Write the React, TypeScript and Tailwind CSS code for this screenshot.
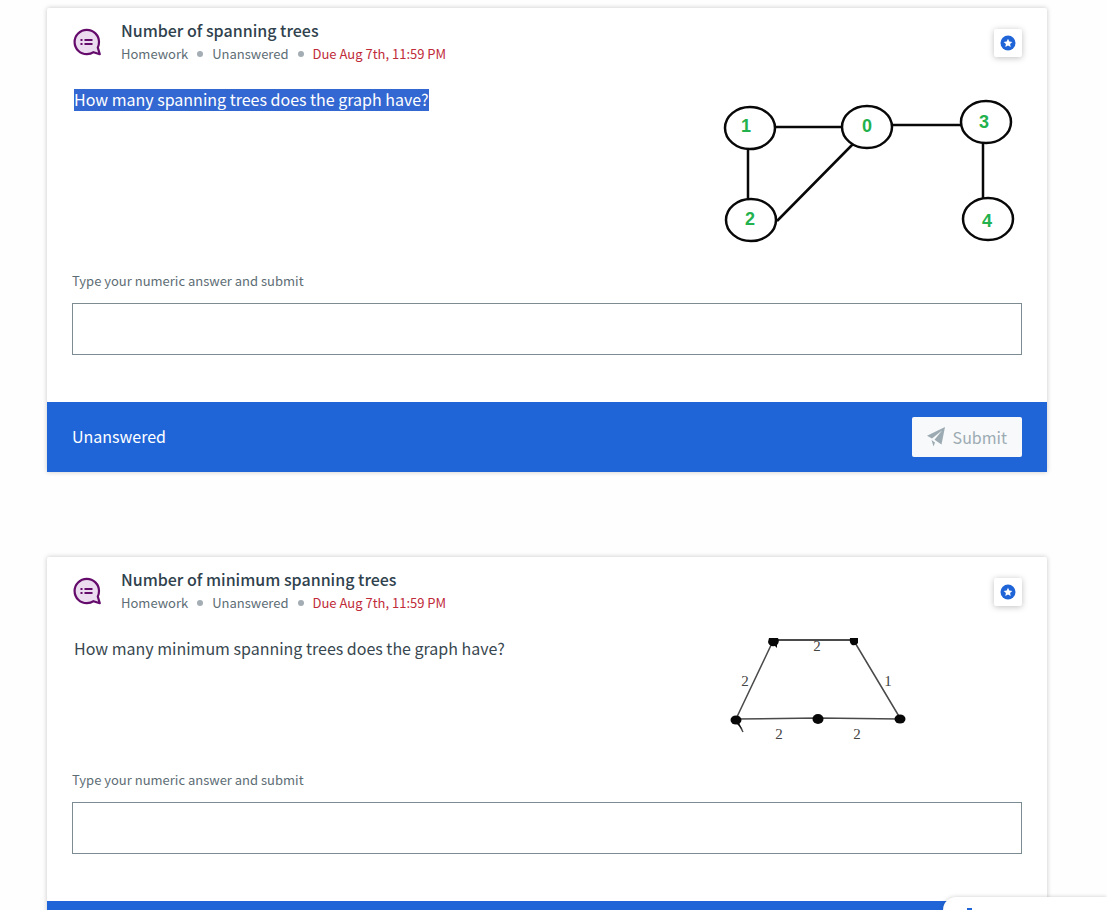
import type { ReactNode } from "react";

type Question = {
  id: string;
  title: string;
  prompt: string;
  selected?: boolean;
  figure: ReactNode;
};

const NODES = [
  { label: "1", cx: 50, cy: 39, tx: 46, ty: 43 },
  { label: "0", cx: 167, cy: 38, tx: 167, ty: 43 },
  { label: "3", cx: 286, cy: 33, tx: 284, ty: 39 },
  { label: "2", cx: 51, cy: 131, tx: 50, ty: 136 },
  { label: "4", cx: 288, cy: 130, tx: 287, ty: 138 },
];

function SpanningGraph() {
  return (
    <svg width="322" height="160" viewBox="0 0 322 160" role="img" aria-label="Graph with five nodes">
      <g stroke="#080808" strokeWidth="2.5" fill="none">
        <path d="M75 38H142M193 36H261M48 60V110M283 54V109M77 132L153 55" />
        {NODES.map((n) => (
          <ellipse key={n.label} cx={n.cx} cy={n.cy} rx="25" ry="21" />
        ))}
      </g>
      {NODES.map((n) => (
        <text
          key={n.label}
          x={n.tx}
          y={n.ty}
          textAnchor="middle"
          fill="#22b14c"
          className="font-['Liberation_Sans',sans-serif] text-[18px] font-bold"
        >
          {n.label}
        </text>
      ))}
    </svg>
  );
}

function WeightedGraph() {
  return (
    <svg width="322" height="110" viewBox="0 0 322 110" role="img" aria-label="Weighted graph with five nodes">
      <g stroke="#4a4a4a" strokeWidth="1.5" fill="none">
        <path d="M73 2H154" strokeWidth="2" />
        <path d="M73 3L36 81L43 94M154 3L200 80M36 81L118 80L200 81" />
      </g>
      <g fill="#080808">
        <path d="M69 0H78Q80 4 77 7L77 10L75 8Q69 9 68 4Z" />
        <path d="M150 0H158V5Q156 8 152 7Q149 5 150 0Z" />
        <ellipse cx="36" cy="82" rx="5.5" ry="4.5" />
        <path d="M38 84L43 92L37 86Z" />
        <ellipse cx="118" cy="81" rx="5.5" ry="5" />
        <ellipse cx="200" cy="81" rx="5.5" ry="4.5" />
      </g>
      <g fill="#444" textAnchor="middle" className="font-['Liberation_Serif',serif] text-[15px]">
        <text x="117" y="13">2</text>
        <text x="45" y="48">2</text>
        <text x="188" y="48">1</text>
        <text x="79" y="101">2</text>
        <text x="157" y="101">2</text>
      </g>
    </svg>
  );
}

function QuestionIcon() {
  return (
    <svg width="30" height="30" viewBox="0 0 30 30" aria-hidden="true" className="shrink-0">
      <path
        d="M27 15A12.2 12.2 0 1 0 15 27.2C17.600 27.200 19.700 26.500 21.500 25.200L27.800 27.200L25.800 20.600C26.600 19 27 17 27 15Z"
        fill="#ecdcf0"
        stroke="#640b6b"
        strokeWidth="2.200"
        strokeLinejoin="round"
      />
      <path d="M8.500 13H10.500M8.500 17H10.500M12.500 13H20.500M12.500 17H20.500" stroke="#640b6b" strokeWidth="2.200" />
    </svg>
  );
}

function StarIcon() {
  return (
    <svg width="16" height="16" viewBox="0 0 16 16" aria-hidden="true">
      <circle cx="8" cy="8" r="7.5" fill="#2065d8" />
      <path d="M8 3.800L9.300 6.600L12.300 6.900L10.100 9L10.700 12L8 10.500L5.300 12L5.900 9L3.700 6.900L6.700 6.600Z" fill="#fff" />
    </svg>
  );
}

function SendIcon() {
  return (
    <svg width="18" height="20" viewBox="0 0 18 20" aria-hidden="true" fill="#9cabb3">
      <path d="M18 0L0 8.800L5 11.500L15 3.500L7.500 12.800L14.500 17.500Z" />
      <path d="M4.500 13L8 15.500L6.500 19.500Z" />
    </svg>
  );
}

const QUESTIONS: Question[] = [
  {
    id: "spanning",
    title: "Number of spanning trees",
    prompt: "How many spanning trees does the graph have?",
    selected: true,
    figure: <SpanningGraph />,
  },
  {
    id: "minimum",
    title: "Number of minimum spanning trees",
    prompt: "How many minimum spanning trees does the graph have?",
    figure: <WeightedGraph />,
  },
];

function Dot() {
  return <span className="size-[6px] rounded-full bg-[#a3adb3]" />;
}

function QuestionCard({ question }: { question: Question }) {
  return (
    <article className="rounded-t-xs bg-white shadow-[0_0_5px_rgba(0,0,0,0.22)]">
      <div className="px-[25px] pb-[47px]">
        <header className="flex items-start justify-between pt-3">
          <div className="flex gap-[19px]">
            <div className="pt-[7px]">
              <QuestionIcon />
            </div>
            <div>
              <h2 className="mb-[2px] text-[16px] leading-5 font-medium text-[#2f424d]">{question.title}</h2>
              <div className="flex items-center gap-[9px] text-[13px] leading-6 text-[#5d6d75]">
                <span>Homework</span>
                <Dot />
                <span>Unanswered</span>
                <Dot />
                <span className="text-[#c02b3a]">Due Aug 7th, 11:59 PM</span>
              </div>
            </div>
          </div>
          <button
            type="button"
            aria-label="Bookmark"
            className="mt-[9px] flex size-7 items-center justify-center rounded-xs bg-white shadow-[0_1px_6px_rgba(0,0,0,0.25)]"
          >
            <StarIcon />
          </button>
        </header>

        <div className="mt-[23px] flex justify-between">
          <p className="pl-[2px] text-[16px] leading-5 text-[#38474f]">
            <span className={question.selected ? "block bg-[#3367d1] pb-[2px] text-white" : "block pb-[2px]"}>
              {question.prompt}
            </span>
          </p>
          {question.figure}
        </div>

        <label htmlFor={question.id} className="mt-5 block text-[13px] leading-6 text-[#5d6d75]">
          Type your numeric answer and submit
        </label>
        <input
          id={question.id}
          type="text"
          inputMode="numeric"
          className="mt-[10px] block h-[52px] w-full border border-[#7d8b92] bg-white px-3 text-[16px] outline-none"
        />
      </div>
      <footer className="flex h-[70px] items-center justify-between bg-[#2065d8] px-[25px]">
        <span className="pb-[2px] text-[16px] leading-5 text-white">Unanswered</span>
        <button
          type="submit"
          className="flex h-10 items-center gap-2 rounded-xs bg-[#f8f9fa] px-[15px] text-[16px] leading-5 text-[#9cabb3]"
        >
          <SendIcon />
          Submit
        </button>
      </footer>
    </article>
  );
}

export default function App() {
  return (
    <div className="h-screen overflow-hidden bg-[#fefefe] font-['Noto_Sans_CJK_SC','Open_Sans',sans-serif]">
      <main className="flex flex-col gap-[85px] pt-2 pr-[60px] pl-[47px]">
        {QUESTIONS.map((q) => (
          <QuestionCard key={q.id} question={q} />
        ))}
      </main>
      <aside className="fixed right-0 bottom-0 h-[13px] w-[164px] overflow-hidden rounded-tl-[18px] bg-white px-6 pt-[11px] shadow-[0_0_4px_rgba(0,0,0,0.2)]">
        <div className="h-2 w-[5px] bg-[#2065d8]" />
      </aside>
    </div>
  );
}
